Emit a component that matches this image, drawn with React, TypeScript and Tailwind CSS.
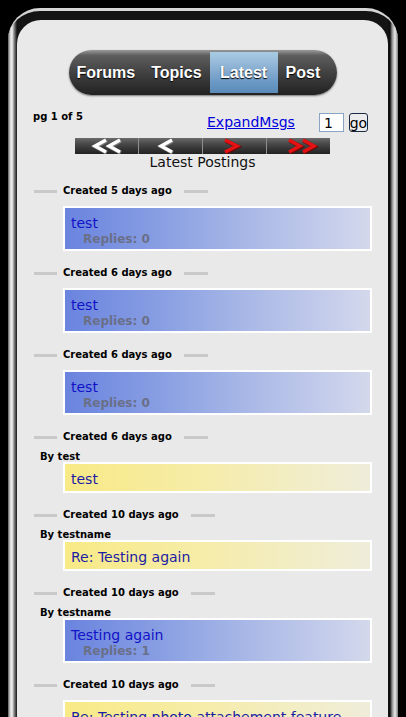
import React from "react";

type Entry = {
  created: string;
  by?: string;
  kind: "blue" | "yellow";
  title: string;
  replies?: number;
};

const entries: Entry[] = [
  { created: "Created 5 days ago", kind: "blue", title: "test", replies: 0 },
  { created: "Created 6 days ago", kind: "blue", title: "test", replies: 0 },
  { created: "Created 6 days ago", kind: "blue", title: "test", replies: 0 },
  { created: "Created 6 days ago", by: "By test", kind: "yellow", title: "test" },
  { created: "Created 10 days ago", by: "By testname", kind: "yellow", title: "Re: Testing again" },
  { created: "Created 10 days ago", by: "By testname", kind: "blue", title: "Testing again", replies: 1 },
  { created: "Created 10 days ago", kind: "yellow", title: "Re: Testing photo attachement feature" },
];

function Chev({ pts, color, shade }: { pts: string[]; color: string; shade: string }) {
  return (
    <svg width="63" height="16" viewBox="0 0 63 16" className="block">
      {pts.map((p, i) => (
        <g key={i}>
          <polyline points={p} fill="none" stroke={shade} strokeWidth="4" strokeLinejoin="miter" transform="translate(0.8,0.8)" />
          <polyline points={p} fill="none" stroke={color} strokeWidth="3.4" strokeLinejoin="miter" />
        </g>
      ))}
    </svg>
  );
}

function Seg({ children }: { children: React.ReactNode }) {
  return (
    <div className="h-[16px] flex-1 bg-[linear-gradient(180deg,#6a6a6a_0%,#4a4a4a_35%,#333_70%,#222_100%)] overflow-hidden">
      {children}
    </div>
  );
}

export default function App() {
  return (
    <div className="h-[717px] w-[406px] overflow-hidden bg-black pt-[8px] px-[8px] font-['DejaVu_Sans',sans-serif]">
      <div className="h-[760px] rounded-t-[32px] border-t-[3px] border-t-[#d6d6d6] bg-[linear-gradient(90deg,#5a5a5a_0px,#cfcfcf_2px,#f2f2f2_4px,#8c8c8c_6px,#3a3a3a_8px,#141414_9px,#141414_calc(100%-10px),#0c0c0c_calc(100%-8px),#8a8a8a_calc(100%-6px),#ececec_calc(100%-3px),#7a7a7a_100%)] pl-[9px] pr-[10px] pt-[9px]">
        <div className="h-[760px] rounded-t-[24px] bg-[#e9e9e9]">
          {/* nav pill */}
          <div className="pt-[30px]">
            <div className="mx-auto flex h-[45px] w-[268px] items-stretch rounded-full bg-[linear-gradient(180deg,#9a9a9a_0%,#5e5e5e_12%,#454545_45%,#2e2e2e_80%,#222_100%)] shadow-[0_1px_2px_rgba(0,0,0,0.5)] font-['Liberation_Sans',sans-serif] text-[16px] font-bold text-white [text-shadow:0_1px_1px_#000]">
              <div className="ml-[8px] flex items-center">Forums</div>
              <div className="ml-[16px] flex items-center">Topics</div>
              <div className="ml-[8px] my-[2px] flex w-[68px] items-center justify-center bg-[linear-gradient(180deg,#a9cbe4_0%,#86acd0_45%,#6a98c4_75%,#5a8ab8_100%)]">
                Latest
              </div>
              <div className="ml-[8px] flex items-center">Post</div>
            </div>
          </div>

          {/* page row */}
          <div className="mt-[18px] flex h-[19px] items-start pl-[16px]">
            <div className="-mt-[3px] w-[174px] text-[10px] font-bold leading-[14px] text-black">pg 1 of 5</div>
            <a className="mt-[1px] text-[14px] leading-[16px] text-[#0000dd] underline">ExpandMsgs</a>
            <div className="ml-[24px] flex h-[19px] w-[25px] items-center border border-[#8aa4c4] bg-white pl-[4px] text-[14px] leading-[16px] text-black">
              1
            </div>
            <div className="ml-[5px] flex h-[19px] w-[19px] items-center justify-center rounded-[3px] border-[1.5px] border-[#1c2a44] bg-[#ececec] text-[14px] leading-[14px] text-black">
              go
            </div>
          </div>

          {/* arrows */}
          <div className="mx-auto mt-[6px] flex w-[255px] gap-[1px] bg-[#8e8e8e]">
            <Seg>
              <Chev pts={["31,2 20,8 31,14", "45,2 34,8 45,14"]} color="#ffffff" shade="#777" />
            </Seg>
            <Seg>
              <Chev pts={["33,2 22,8 33,14"]} color="#ffffff" shade="#777" />
            </Seg>
            <Seg>
              <Chev pts={["22,2 34,8 22,14"]} color="#e41212" shade="#6a0a0a" />
            </Seg>
            <Seg>
              <Chev pts={["22,2 33,8 22,14", "36,2 47,8 36,14"]} color="#e41212" shade="#6a0a0a" />
            </Seg>
          </div>
          <div className="text-center text-[14px] leading-[16px] text-[#111]">Latest Postings</div>

          {/* entries */}
          <div className="mt-[14px] flex flex-col gap-[15px]">
            {entries.map((e, i) => (
              <div key={i}>
                <div className="flex h-[14px] items-center pl-[17px]">
                  <div className="h-[3px] w-[23px] bg-[#c9c9c9]" />
                  <div className="ml-[6px] text-[10px] font-bold leading-[14px] text-black">{e.created}</div>
                  <div className="ml-[12px] h-[3px] w-[24px] bg-[#c9c9c9]" />
                </div>
                {e.by ? (
                  <div className="mt-[8px] pl-[23px] text-[10px] font-bold leading-[10px] text-black">{e.by}</div>
                ) : (
                  <div className="h-[8px]" />
                )}
                {e.kind === "blue" ? (
                  <div className="ml-[46px] w-[309px] border-2 border-white bg-[linear-gradient(90deg,#6a84df_0%,#8ca2e3_35%,#a9b8e6_60%,#c4cceb_85%,#d3d8eb_100%)] pl-[6px] pt-[7px] pb-[2px]">
                    <div className="text-[14px] leading-[16px] text-[#1212c8]">{e.title}</div>
                    <div className="ml-[12px] text-[12px] font-bold leading-[16px] text-[#6a6f88]">Replies: {e.replies}</div>
                  </div>
                ) : (
                  <div className="ml-[46px] w-[309px] border-2 border-white bg-[linear-gradient(90deg,#f8ea86_0%,#f6eca4_40%,#f2edc4_75%,#efedda_100%)] pl-[6px] pt-[7px] pb-[4px]">
                    <div className="whitespace-nowrap text-[14px] leading-[16px] text-[#1c1ca6]">{e.title}</div>
                  </div>
                )}
              </div>
            ))}
          </div>
        </div>
      </div>
    </div>
  );
}
